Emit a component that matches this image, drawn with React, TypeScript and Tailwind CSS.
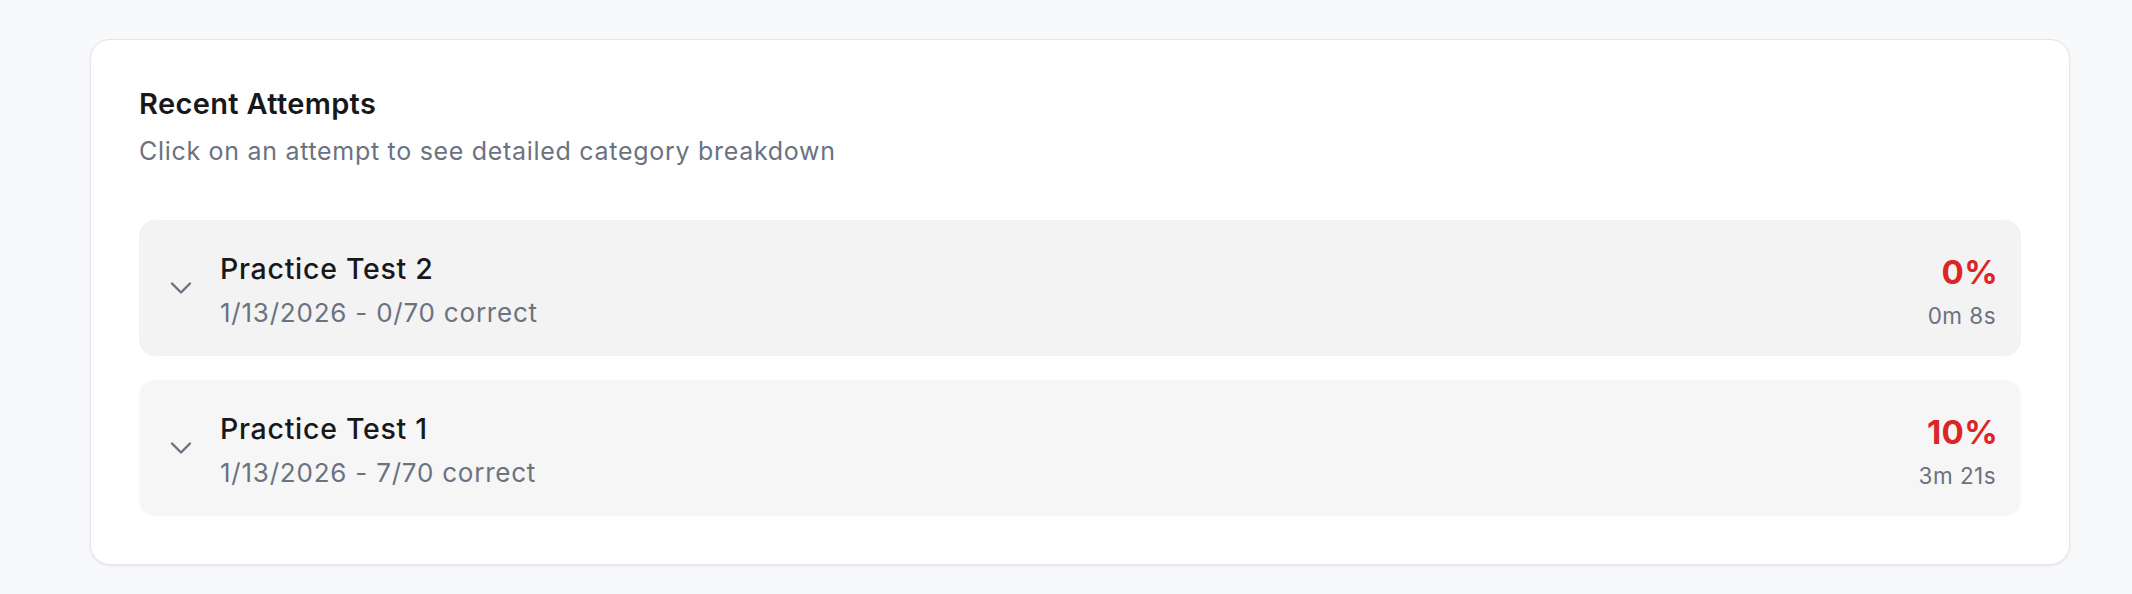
import { ChevronDown } from 'lucide-react';

type Attempt = {
    name: string;
    date: string;
    correct: number;
    total: number;
    score: number;
    time: string;
    hovered?: boolean;
};

const attempts: Attempt[] = [
    { name: 'Practice Test 2', date: '1/13/2026', correct: 0, total: 70, score: 0, time: '0m 8s', hovered: true },
    { name: 'Practice Test 1', date: '1/13/2026', correct: 7, total: 70, score: 10, time: '3m 21s' },
];

function AttemptRow({ attempt }: { attempt: Attempt }) {
    return (
        <button
            className={`flex h-[136px] w-full items-center rounded-[16px] pl-[24px] pr-[25px] text-left ${attempt.hovered ? 'bg-[#f3f3f4]' : 'bg-[#f6f6f7]'}`}
        >
            <ChevronDown className="h-[36px] w-[36px] shrink-0 text-[#6b7280]" strokeWidth={1.6} />
            <div className="ml-[21px] flex flex-1 flex-col pt-[4px]">
                <span className="text-[28.5px] font-medium leading-[40px] tracking-[0.025em] text-[#18181b]">
                    {attempt.name}
                </span>
                <span className="mt-[6px] text-[26px] leading-[36px] tracking-[0.03em] text-[#6b7280]">
                    {attempt.date} - {attempt.correct}/{attempt.total} correct
                </span>
            </div>
            <div className="-mr-[2px] flex flex-col items-end pt-[8px]">
                <span className="text-[33px] font-bold leading-[40px] tracking-[0.01em] text-[#dc2626]">{attempt.score}%</span>
                <span className="mr-[2px] mt-[8px] text-[22.5px] leading-[32px] tracking-[0.02em] text-[#6b7280]">{attempt.time}</span>
            </div>
        </button>
    );
}

export default function App() {
    return (
        <div
            className="min-h-[594px] bg-[#f8f9fb] pl-[90px] pr-[62px] pt-[39px]"
            style={{ fontFamily: 'Inter, "Noto Sans", sans-serif' }}
        >
            {/* Recent attempts card */}
            <section className="rounded-[20px] border border-[#e4e5e9] bg-white px-12 pb-12 pt-[44px] shadow-[0_1px_3px_rgba(0,0,0,0.08)]">
                <h2 className="text-[29px] font-semibold leading-[40px] tracking-[0.012em] text-[#18181b]">Recent Attempts</h2>
                <p className="mt-[9px] text-[25px] leading-[36px] tracking-[0.028em] text-[#6b7280]">
                    Click on an attempt to see detailed category breakdown
                </p>

                <div className="mt-[51px] flex flex-col gap-[24px]">
                    {attempts.map((a) => (
                        <AttemptRow key={a.name} attempt={a} />
                    ))}
                </div>
            </section>
        </div>
    );
}
